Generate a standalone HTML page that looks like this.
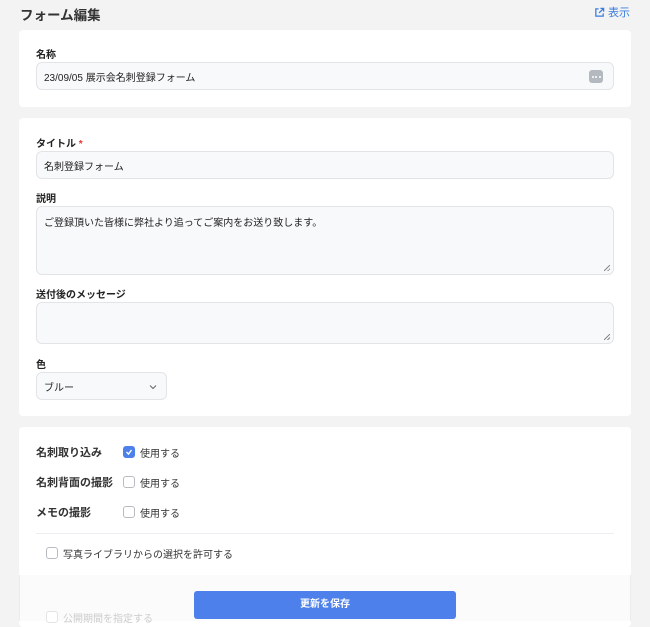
<!DOCTYPE html>
<html><head><meta charset="utf-8"><style>
*{box-sizing:border-box;margin:0;padding:0}
body{width:650px;height:621px;overflow:hidden;background:#f3f3f3;font-family:"Liberation Sans","Noto Sans CJK JP",sans-serif;color:#222;position:relative}
.abs{position:absolute}
.card{position:absolute;left:19px;width:612px;background:#fff;border-radius:4px}
.lbl{position:absolute;left:36px;font-size:10px;font-weight:bold;color:#222}
.inp{position:absolute;left:36px;width:578px;background:#f8f9fa;border:1px solid #e2e4e8;border-radius:6px;font-size:10px;color:#222;padding-left:7px}
.one{display:flex;align-items:center}
.cb{position:absolute;width:12px;height:12px;border:1px solid #b8bcc2;border-radius:3px;background:#fff}
.cb svg{display:block}
.big{position:absolute;left:36px;font-size:11px;font-weight:bold;color:#333}
.use{position:absolute;left:140px;font-size:10px;color:#333}
.grip{position:absolute;right:3px;bottom:3px;width:6px;height:6px;background:linear-gradient(135deg,transparent 45%,#888 45%,#888 55%,transparent 55%,transparent 75%,#888 75%,#888 85%,transparent 85%)}
</style></head><body>
<div class="abs" style="left:20px;top:4px;font-size:13.5px;font-weight:bold;color:#333">フォーム編集</div>
<div class="abs" style="left:594px;top:4px;font-size:11px;color:#3b7de0;display:flex;align-items:center;gap:3px">
<svg width="11" height="11" viewBox="0 0 12 12" fill="none" stroke="#3b7de0" stroke-width="1.4"><path d="M5 2H2v8h8V7"/><path d="M7 1.5h3.5V5M10.5 1.5 5.5 6.5"/></svg>表示</div>

<div class="card" style="top:30px;height:77px"></div>
<div class="lbl" style="top:46px">名称</div>
<div class="inp one" style="top:62px;height:28px">23/09/05 展示会名刺登録フォーム
<div class="abs" style="right:10px;top:7px;width:14px;height:13px;background:#b4b8bf;border-radius:3px;display:flex;align-items:center;justify-content:center;gap:1.5px"><i style="width:2px;height:2px;background:#fff;border-radius:1px"></i><i style="width:2px;height:2px;background:#fff;border-radius:1px"></i><i style="width:2px;height:2px;background:#fff;border-radius:1px"></i></div></div>

<div class="card" style="top:118px;height:298px"></div>
<div class="lbl" style="top:135px">タイトル <span style="color:#e33">*</span></div>
<div class="inp one" style="top:151px;height:28px">名刺登録フォーム</div>
<div class="lbl" style="top:190px">説明</div>
<div class="inp" style="top:206px;height:69px;padding-top:7px">ご登録頂いた皆様に弊社より追ってご案内をお送り致します。<div class="grip"></div></div>
<div class="lbl" style="top:286px">送付後のメッセージ</div>
<div class="inp" style="top:302px;height:42px"><div class="grip"></div></div>
<div class="lbl" style="top:356px">色</div>
<div class="inp one" style="top:372px;width:131px;height:28px">ブルー
<svg class="abs" style="right:9px;top:11px" width="8" height="6" viewBox="0 0 8 6" fill="none" stroke="#666" stroke-width="1"><path d="M1 1.5l3 3 3-3"/></svg></div>

<div class="card" style="top:427px;height:200px"></div>
<div class="big" style="top:444px">名刺取り込み</div>
<div class="cb" style="left:123px;top:446px;background:#4d80ea;border-color:#4d80ea"><svg width="10" height="10" viewBox="0 0 10 10" fill="none" stroke="#fff" stroke-width="1.4"><path d="M2.5 5l2 2 3-4"/></svg></div>
<div class="use" style="top:445px">使用する</div>
<div class="big" style="top:474px">名刺背面の撮影</div>
<div class="cb" style="left:123px;top:476px"></div>
<div class="use" style="top:475px">使用する</div>
<div class="big" style="top:504px">メモの撮影</div>
<div class="cb" style="left:123px;top:506px"></div>
<div class="use" style="top:505px">使用する</div>
<div class="abs" style="left:36px;top:533px;width:578px;height:1px;background:#ebedf0"></div>
<div class="cb" style="left:46px;top:547px"></div>
<div class="abs" style="left:63px;top:546px;font-size:10px;color:#333">写真ライブラリからの選択を許可する</div>

<div class="abs" style="left:19px;top:575px;width:612px;height:46px;background:#fbfbfb;border-left:1px solid #ececec;border-right:1px solid #ececec"></div>
<div class="cb" style="left:46px;top:611px;border-color:#e4e4e4"></div>
<div class="abs" style="left:63px;top:610px;font-size:10px;color:#ccc">公開期間を指定する</div>
<div class="abs" style="left:194px;top:591px;width:262px;height:28px;background:#4d80ea;border-radius:3px;color:#fff;font-size:10px;font-weight:bold;text-align:center;line-height:28px">更新を保存</div>
</body></html>
